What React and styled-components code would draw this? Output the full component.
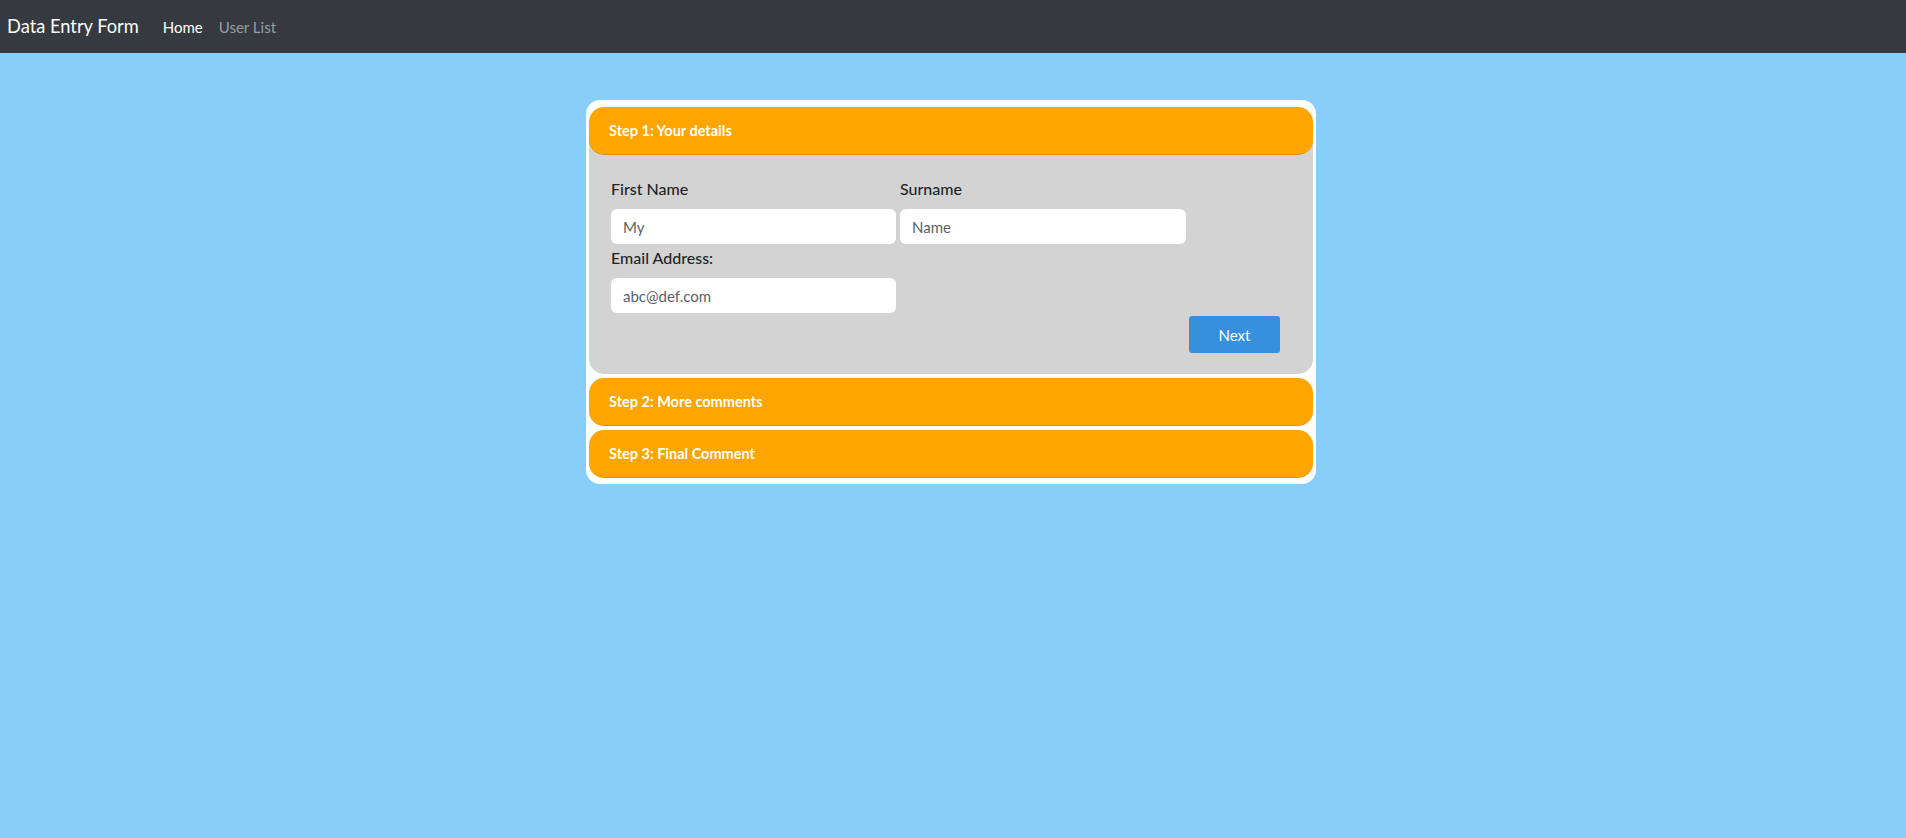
import styled, { createGlobalStyle } from "styled-components";

const GlobalStyle = createGlobalStyle`
* { box-sizing: border-box; }
html, body {
    margin: 0;
    padding: 0;
    min-height: 100%;
    background-color: #87cefa;
    font-family: Lato, "Noto Sans", "Open Sans", sans-serif;
    color: #212529;
}
`

const Page = styled.div`
min-height: 838px;
background-color: #87cefa;
`

const NavBar = styled.nav`
height: 53px;
display: flex;
align-items: center;
gap: 24px;
padding: 0 7px;
background-color: #343a40;
`

const Brand = styled.span`
color: white;
font-size: 18.3px;
line-height: 1;
`

const NavLinks = styled.div`
display: flex;
gap: 16px;
`

const NavLink = styled.a`
color: ${({$active})=> $active ? "white" : "rgba(255,255,255,.5)"};
font-size: 15px;
text-decoration: none;
cursor: pointer;
`

const Main = styled.main`
display: flex;
justify-content: center;
padding: 47px 4px 0 0;
`

const Accordion = styled.div`
width: 730px;
background-color: white;
border-radius: 14px;
padding: 7px 3px 6px;
display: flex;
flex-direction: column;
gap: 4px;
`

const Item = styled.section`
border-radius: 15px;
background: ${({$open})=> $open ? "linear-gradient(to bottom, white 24px, #d3d3d3 24px)" : "white"};
`

const ItemHeader = styled.button`
width: 100%;
height: 48px;
display: flex;
align-items: center;
padding: 0 20px;
border: none;
border-bottom: 1px solid #e0930a;
border-radius: 15px;
background-color: orange;
color: white;
font-family: inherit;
font-size: 14.5px;
font-weight: 700;
cursor: pointer;
`

const ItemBody = styled.div`
padding: 22px 22px 21px;
`

const FieldGrid = styled.div`
display: grid;
grid-template-columns: 285px 286px;
column-gap: 4px;
`

const Field = styled.div`
display: flex;
flex-direction: column;
`

const Label = styled.label`
font-size: 16px;
line-height: 24px;
font-weight: 500;
color: #212529;
margin: ${({$spaced})=> $spaced ? "2px 0 8px" : "0 0 8px"};
`

const Input = styled.input`
height: 35px;
border: none;
border-radius: 6px;
background-color: white;
padding: 0 12px;
font-family: inherit;
font-size: 15px;
color: #495057;
outline: none;
&::placeholder{
    color: #5b6169;
}
`

const Actions = styled.div`
display: flex;
justify-content: flex-end;
padding-right: 11px;
margin-top: 3px;
`

const NextButton = styled.button`
width: 91px;
height: 37px;
border: none;
border-radius: 3px;
background-color: #3790dd;
color: white;
font-family: inherit;
font-size: 15px;
cursor: pointer;
`

export default function App(){
    return (
        <>
            <GlobalStyle />
            <Page>
                <NavBar>
                    <Brand>Data Entry Form</Brand>
                    <NavLinks>
                        <NavLink $active>Home</NavLink>
                        <NavLink>User List</NavLink>
                    </NavLinks>
                </NavBar>
                <Main>
                    <Accordion>
                        <Item $open>
                            <ItemHeader>Step 1: Your details</ItemHeader>
                            <ItemBody>
                                <FieldGrid>
                                    <Field>
                                        <Label>First Name</Label>
                                        <Input placeholder="My" />
                                    </Field>
                                    <Field>
                                        <Label>Surname</Label>
                                        <Input placeholder="Name" />
                                    </Field>
                                    <Field>
                                        <Label $spaced>Email Address:</Label>
                                        <Input placeholder="abc@def.com" />
                                    </Field>
                                </FieldGrid>
                                <Actions>
                                    <NextButton>Next</NextButton>
                                </Actions>
                            </ItemBody>
                        </Item>
                        <Item>
                            <ItemHeader>Step 2: More comments</ItemHeader>
                        </Item>
                        <Item>
                            <ItemHeader>Step 3: Final Comment</ItemHeader>
                        </Item>
                    </Accordion>
                </Main>
            </Page>
        </>
    )
}
